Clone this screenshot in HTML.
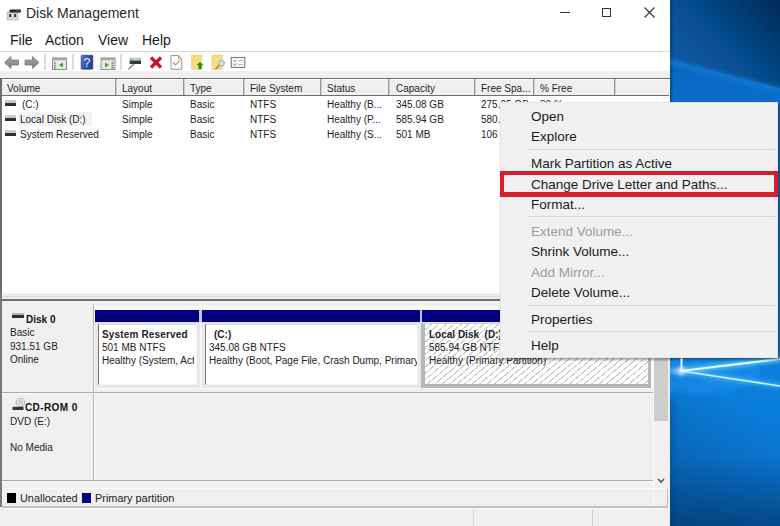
<!DOCTYPE html>
<html><head><meta charset="utf-8">
<style>
*{box-sizing:border-box;margin:0;padding:0}
html,body{width:780px;height:526px;overflow:hidden}
body{position:relative;font-family:"Liberation Sans",sans-serif;background:#0a5fb4}
.a{position:absolute}
.t{position:absolute;white-space:nowrap;color:#222;line-height:1}
#win{left:0;top:0;width:670px;height:526px;background:#fff}
.menu{font-size:14px;color:#1a1a1a}
.h{font-size:10px;color:#1e1e1e}
.r{font-size:10px;color:#1e1e1e}
.hs{top:79px;width:2px;height:16px;background:#969696;border-right:1px solid #d0d0d0}
.b{font-weight:bold}
.cm{font-size:13.5px;color:#1a1a1a;left:531px}
.dis{color:#9d9d9d}
.sep{left:528px;width:247px;height:1px;background:#d7d7d7}
.dicon{width:11px;height:6px;background:linear-gradient(#c9d3c9 0,#c2ccc2 45%,#2c3830 45%,#26302a 100%)}
.bar{height:12px;background:#000080}
.pbox{height:61px;background:#fff;border-left:1px solid #767676;border-top:1px solid #d4d4d4;border-right:1px solid #f2f2f2;border-bottom:1px solid #f2f2f2}
.hatch{background:#fff repeating-linear-gradient(140deg,#fff 0,#fff 3.7px,#cccccc 3.7px,#cccccc 4.8px);border:3px solid #b8b8b8;border-left-width:4px;border-bottom-width:4px;border-top:1px solid #d4d4d4}
.pt{font-size:10px;color:#222}
</style></head><body>
<!-- desktop -->
<svg class="a" style="left:668px;top:0" width="112" height="526" viewBox="668 0 112 526">
<defs>
<linearGradient id="dg" x1="0" y1="0" x2="0" y2="526" gradientUnits="userSpaceOnUse">
<stop offset="0" stop-color="#0b3a78"/>
<stop offset="0.11" stop-color="#0a64ba"/>
<stop offset="0.19" stop-color="#0a6ecc"/>
<stop offset="0.72" stop-color="#0a80dc"/>
<stop offset="0.87" stop-color="#0a76d2"/>
<stop offset="1" stop-color="#04508f"/>
</linearGradient>
<linearGradient id="lg" x1="670" y1="0" x2="676" y2="0" gradientUnits="userSpaceOnUse">
<stop offset="0" stop-color="#06306a" stop-opacity="0.3"/>
<stop offset="1" stop-color="#06306a" stop-opacity="0"/>
</linearGradient>
<linearGradient id="tg" x1="775" y1="0" x2="690" y2="85" gradientUnits="userSpaceOnUse">
<stop offset="0" stop-color="#012c58"/>
<stop offset="0.5" stop-color="#064a8c"/>
<stop offset="1" stop-color="#0a5aa8"/>
</linearGradient>
<filter id="bl" filterUnits="userSpaceOnUse" x="600" y="0" width="200" height="526"><feGaussianBlur stdDeviation="2"/></filter>
<filter id="bl1" filterUnits="userSpaceOnUse" x="600" y="0" width="200" height="526"><feGaussianBlur stdDeviation="0.6"/></filter>
</defs>
<rect x="668" y="0" width="112" height="526" fill="url(#dg)"/>
<path d="M668 0H780V88L668 59Z" fill="url(#tg)" filter="url(#bl1)"/>
<linearGradient id="bg2" x1="670" y1="526" x2="760" y2="420" gradientUnits="userSpaceOnUse"><stop offset="0" stop-color="#042a60" stop-opacity="0.35"/><stop offset="1" stop-color="#042a60" stop-opacity="0"/></linearGradient>
<rect x="668" y="340" width="112" height="186" fill="url(#bg2)"/>
<rect x="668" y="400" width="22" height="140" fill="url(#lg)" filter="url(#bl)"/>
<linearGradient id="lg2" x1="670" y1="0" x2="674" y2="0" gradientUnits="userSpaceOnUse"><stop offset="0" stop-color="#03306a" stop-opacity="0.6"/><stop offset="1" stop-color="#03306a" stop-opacity="0"/></linearGradient>
<rect x="670" y="0" width="5" height="360" fill="url(#lg2)"/>
<path d="M668 61L780 90" stroke="#1a84e0" stroke-width="6" filter="url(#bl)" opacity="0.45"/>
<ellipse cx="700" cy="372" rx="60" ry="22" fill="#2a9cf8" opacity="0.35" filter="url(#bl)"/>
<path d="M681 371L780 359" stroke="#6fd6ff" stroke-width="5.5" filter="url(#bl)" opacity="0.75"/>
<path d="M681 371L780 386" stroke="#6fd6ff" stroke-width="4" filter="url(#bl)" opacity="0.6"/>
<path d="M681 371L780 359" stroke="#dcfaff" stroke-width="2.2" filter="url(#bl1)"/>
<path d="M681 371L780 386" stroke="#c8f2ff" stroke-width="1.5" filter="url(#bl1)"/>
<circle cx="681" cy="371" r="3.5" fill="#ffffff" filter="url(#bl)"/>
<path d="M670 371L681 371" stroke="#bfefff" stroke-width="2.5" filter="url(#bl)"/>
</svg>

<div id="win" class="a"></div>
<!-- title bar -->
<svg class="a" style="left:6px;top:8px" width="16" height="13" viewBox="0 0 16 13">
<rect x="1" y="4" width="11" height="8" fill="#d4d4d4" stroke="#b9b9b9" stroke-width="0.8"/>
<rect x="3.3" y="6" width="1.8" height="3" fill="#2d2d2d"/>
<rect x="8.3" y="6" width="1.8" height="3" fill="#2d2d2d"/>
<rect x="3.5" y="1.5" width="11.5" height="3" rx="1.2" fill="#262626"/>
<rect x="10" y="1.8" width="4.5" height="2.4" rx="1" fill="#34443a"/>
</svg>
<div class="t" style="left:26px;top:6px;font-size:14px;color:#2b2b2b">Disk Management</div>
<div class="a" style="left:560px;top:12px;width:10px;height:1px;background:#333"></div>
<div class="a" style="left:602px;top:8px;width:9px;height:9px;border:1px solid #333"></div>
<svg class="a" style="left:644px;top:7px" width="11" height="11" viewBox="0 0 11 11"><path d="M0.5 0.5L10.5 10.5M10.5 0.5L0.5 10.5" stroke="#333" stroke-width="1.1"/></svg>
<!-- menu -->
<div class="t menu" style="left:10px;top:33px">File</div>
<div class="t menu" style="left:45px;top:33px">Action</div>
<div class="t menu" style="left:98px;top:33px">View</div>
<div class="t menu" style="left:142px;top:33px">Help</div>
<div class="a" style="left:0;top:51px;width:670px;height:1px;background:#dadada"></div>
<!-- toolbar band -->
<div class="a" style="left:0;top:71px;width:670px;height:7px;background:#f0f0f0"></div>
<!-- list panel -->
<div class="a" style="left:0;top:78px;width:670px;height:216px;background:#fff;border-left:2px solid #6e6e6e;border-top:1px solid #6e6e6e"></div>
<div class="a" style="left:2px;top:79px;width:667px;height:17px;background:#f0f0f0;border-bottom:1px solid #6e6e6e;border-top:1px solid #fcfcfc"></div>
<div class="a hs" style="left:115px"></div>
<div class="a hs" style="left:183px"></div>
<div class="a hs" style="left:243px"></div>
<div class="a hs" style="left:320px"></div>
<div class="a hs" style="left:388px"></div>
<div class="a hs" style="left:474px"></div>
<div class="a hs" style="left:533px"></div>
<div class="a hs" style="left:614px"></div>
<div class="t h" style="left:7px;top:83.5px">Volume</div>
<div class="t h" style="left:122px;top:83.5px">Layout</div>
<div class="t h" style="left:190px;top:83.5px">Type</div>
<div class="t h" style="left:250px;top:83.5px">File System</div>
<div class="t h" style="left:327px;top:83.5px">Status</div>
<div class="t h" style="left:396px;top:83.5px">Capacity</div>
<div class="t h" style="left:481px;top:83.5px">Free Spa...</div>
<div class="t h" style="left:540px;top:83.5px">% Free</div>
<!-- rows -->
<div class="a" style="left:18px;top:112px;width:74px;height:14px;background:#f3f3f3"></div>
<div class="a dicon" style="left:5px;top:100px"></div>
<div class="t r" style="left:22px;top:100px">(C:)</div>
<div class="t r" style="left:122px;top:100px">Simple</div>
<div class="t r" style="left:190px;top:100px">Basic</div>
<div class="t r" style="left:250px;top:100px">NTFS</div>
<div class="t r" style="left:327px;top:100px">Healthy (B...</div>
<div class="t r" style="left:396px;top:100px">345.08 GB</div>
<div class="t r" style="left:481px;top:100px">275.05 GB</div>
<div class="t r" style="left:540px;top:100px">80 %</div>
<div class="a dicon" style="left:5px;top:115px"></div>
<div class="t r" style="left:20px;top:115px">Local Disk (D:)</div>
<div class="t r" style="left:122px;top:115px">Simple</div>
<div class="t r" style="left:190px;top:115px">Basic</div>
<div class="t r" style="left:250px;top:115px">NTFS</div>
<div class="t r" style="left:327px;top:115px">Healthy (P...</div>
<div class="t r" style="left:396px;top:115px">585.94 GB</div>
<div class="t r" style="left:481px;top:115px">580.</div>
<div class="a dicon" style="left:5px;top:130px"></div>
<div class="t r" style="left:20px;top:130px">System Reserved</div>
<div class="t r" style="left:122px;top:130px">Simple</div>
<div class="t r" style="left:190px;top:130px">Basic</div>
<div class="t r" style="left:250px;top:130px">NTFS</div>
<div class="t r" style="left:327px;top:130px">Healthy (S...</div>
<div class="t r" style="left:396px;top:130px">501 MB</div>
<div class="t r" style="left:481px;top:130px">106</div>


<!-- graph panel -->
<div class="a" style="left:0;top:293px;width:670px;height:7px;background:#ededed;border-left:2px solid #7a7a7a"></div>
<div class="a" style="left:2px;top:296px;width:668px;height:1px;background:#e0e0e0"></div>
<div class="a" style="left:0;top:299px;width:670px;height:208px;background:#f0f0f0;border-left:2px solid #7a7a7a;border-top:2px solid #707070"></div>
<!-- disk0 row -->
<div class="a" style="left:93px;top:304px;width:1px;height:88px;background:#b8b8b8"></div><div class="a" style="left:94px;top:304px;width:1px;height:88px;background:#fafafa"></div>
<div class="a" style="left:94px;top:306px;width:559px;height:83px;background:#f9f9f9"></div>
<div class="a" style="left:2px;top:392px;width:651px;height:1px;background:#ababab"></div>
<div class="a" style="left:2px;top:393px;width:651px;height:1px;background:#fbfbfb"></div>
<svg class="a" style="left:12px;top:313px" width="12" height="6" viewBox="0 0 12 6"><rect x="0" y="0" width="12" height="2" fill="#a9bba9"/><rect x="0" y="2" width="12" height="3" fill="#2e2e2e"/></svg>
<div class="t b" style="left:26px;top:314.5px;font-size:10px;color:#111">Disk 0</div>
<div class="t" style="left:10px;top:328px;font-size:10px;color:#222">Basic</div>
<div class="t" style="left:10px;top:341.5px;font-size:10px;color:#222">931.51 GB</div>
<div class="t" style="left:10px;top:355px;font-size:10px;color:#222">Online</div>
<!-- partitions -->
<div class="a" style="left:95px;top:321px;width:556px;height:2px;background:#dcdcf2"></div>
<div class="a bar" style="left:95px;top:310px;width:104px"></div>
<div class="a bar" style="left:202px;top:310px;width:218px"></div>
<div class="a bar" style="left:422px;top:310px;width:229px"></div>
<div class="a" style="left:199px;top:310px;width:3px;height:11px;background:#c4c4ec"></div>
<div class="a" style="left:420px;top:310px;width:2px;height:11px;background:#c4c4ec"></div>
<div class="a" style="left:95px;top:323px;width:105px;height:65px;background:#e8e8e8"></div>
<div class="a" style="left:202px;top:323px;width:219px;height:65px;background:#e8e8e8"></div>
<div class="a" style="left:200px;top:323px;width:2px;height:65px;background:#f6f6f6"></div>
<div class="a pbox" style="left:98px;top:324px;width:99px"></div>
<div class="a pbox" style="left:205px;top:324px;width:213px"></div>
<div class="a hatch" style="left:421px;top:323px;width:230px;height:65px"></div>
<div class="t b pt" style="left:102px;top:330px;letter-spacing:0.15px">System Reserved</div>
<div class="t pt" style="left:102px;top:343px">501 MB NTFS</div>
<div class="t pt" style="left:102px;top:356px;width:92px;overflow:hidden">Healthy (System, Active, Primary Partition)</div>
<div class="t b pt" style="left:214px;top:330px">(C:)</div>
<div class="t pt" style="left:209px;top:343px">345.08 GB NTFS</div>
<div class="t pt" style="left:209px;top:356px;width:208px;overflow:hidden">Healthy (Boot, Page File, Crash Dump, Primary Partition)</div>
<div class="t b pt" style="left:429px;top:330px">Local Disk&nbsp; (D:)</div>
<div class="t pt" style="left:429px;top:343px">585.94 GB NTFS</div>
<div class="t pt" style="left:429px;top:356px">Healthy (Primary Partition)</div>
<!-- cd row -->
<div class="a" style="left:93px;top:394px;width:1px;height:86px;background:#b8b8b8"></div><div class="a" style="left:94px;top:394px;width:1px;height:86px;background:#fafafa"></div>
<div class="a" style="left:2px;top:480px;width:651px;height:1px;background:#ababab"></div>
<div class="a" style="left:2px;top:481px;width:651px;height:1px;background:#fbfbfb"></div>
<svg class="a" style="left:12px;top:398px" width="14" height="13" viewBox="0 0 14 13"><circle cx="8.5" cy="4.5" r="4.4" fill="#dedede" stroke="#b0b0b0" stroke-width="0.9"/><circle cx="8.5" cy="4.5" r="1.3" fill="#f4f4f4" stroke="#999" stroke-width="0.6"/><rect x="0.5" y="8.8" width="11" height="3.2" fill="#2e3a32"/></svg>
<div class="t b" style="left:25px;top:403px;font-size:10px;color:#111;letter-spacing:0.4px">CD-ROM 0</div>
<div class="t" style="left:10px;top:417px;font-size:10px;color:#222">DVD (E:)</div>
<div class="t" style="left:10px;top:443px;font-size:10px;color:#222">No Media</div>
<!-- scrollbar -->
<div class="a" style="left:653px;top:301px;width:16px;height:206px;background:#f0f0f0"></div>
<div class="a" style="left:654px;top:301px;width:14px;height:120px;background:#cdcdcd"></div>
<div class="a" style="left:653px;top:301px;width:1px;height:206px;background:#fafafa"></div>
<svg class="a" style="left:657px;top:478px" width="8" height="6" viewBox="0 0 8 6"><path d="M1 1L4 4L7 1" stroke="#555" stroke-width="1.6" fill="none"/></svg>
<!-- legend -->
<div class="a" style="left:2px;top:506px;width:666px;height:2px;background:#c0c0c0"></div>
<div class="a" style="left:667px;top:489px;width:1px;height:18px;background:#c0c0c0"></div><div class="a" style="left:2px;top:488px;width:665px;height:1px;background:#fafafa"></div>
<div class="a" style="left:7px;top:493px;width:9px;height:10px;background:#000"></div>
<div class="t" style="left:20px;top:493px;font-size:10.9px;color:#222">Unallocated</div>
<div class="a" style="left:82px;top:493px;width:9px;height:10px;background:#000080"></div>
<div class="t" style="left:95px;top:493px;font-size:10.9px;color:#222">Primary partition</div>
<!-- status bar -->
<div class="a" style="left:0;top:508px;width:670px;height:18px;background:#f0f0f0;border-top:1px solid #fafafa"></div>
<div class="a" style="left:592px;top:510px;width:1px;height:16px;background:#d0d0d0"></div>
<div class="a" style="left:473px;top:510px;width:1px;height:16px;background:#d8d8d8"></div>

<!-- toolbar -->
<svg class="a" style="left:0;top:52px" width="260" height="19" viewBox="0 0 260 19">
<defs>
<linearGradient id="ag" x1="0" y1="0" x2="0" y2="1"><stop offset="0" stop-color="#a6a6a6"/><stop offset="1" stop-color="#7d7d7d"/></linearGradient>
</defs>
<!-- back -->
<path d="M4.5 10.5L11 4.5V8H18.5V13H11V16.5Z" fill="url(#ag)" stroke="#7a7a7a" stroke-width="0.8" stroke-linejoin="round"/>
<!-- forward -->
<path d="M39 10.5L32.5 4.5V8H25V13H32.5V16.5Z" fill="url(#ag)" stroke="#7a7a7a" stroke-width="0.8" stroke-linejoin="round"/>
<rect x="44.3" y="2" width="1.4" height="16" fill="#cfcfcf"/>
<!-- console tree icon -->
<rect x="52.5" y="6" width="14" height="11.5" fill="#eceeec" stroke="#8e8e8e" stroke-width="1"/>
<rect x="52.5" y="6" width="14" height="2.2" fill="#a4a4a4"/>
<rect x="53.5" y="9" width="3" height="8" fill="#d8d8d8"/>
<rect x="54.2" y="10.5" width="1.5" height="1.2" fill="#666"/><rect x="54.2" y="13" width="1.5" height="1.2" fill="#666"/><rect x="54.2" y="15.2" width="1.5" height="1.2" fill="#666"/>
<rect x="57" y="9" width="9" height="8" fill="#e0f2d8"/>
<path d="M63 10.5L59 13L63 15.5Z" fill="#4a9a3e"/>
<rect x="72.3" y="2" width="1.4" height="16" fill="#cfcfcf"/>
<!-- help -->
<defs><linearGradient id="hg" x1="0" y1="0" x2="1" y2="0.3"><stop offset="0" stop-color="#5078cc"/><stop offset="0.5" stop-color="#3558b0"/><stop offset="1" stop-color="#23428e"/></linearGradient></defs>
<rect x="81.2" y="3.3" width="11.6" height="13.9" rx="0.8" fill="url(#hg)" stroke="#233e80" stroke-width="0.7"/>
<text x="87" y="14.6" font-family="Liberation Sans" font-size="12.5" fill="#e4ecff" text-anchor="middle">?</text>
<!-- console icon 2 -->
<rect x="101" y="6" width="14" height="11.5" fill="#eceeec" stroke="#8e8e8e" stroke-width="1"/>
<rect x="101" y="6" width="14" height="2.2" fill="#a4a4a4"/>
<rect x="111" y="9" width="3" height="8" fill="#d8d8d8"/>
<rect x="111.8" y="10.5" width="1.5" height="1.2" fill="#666"/><rect x="111.8" y="13" width="1.5" height="1.2" fill="#666"/><rect x="111.8" y="15.2" width="1.5" height="1.2" fill="#666"/>
<rect x="102" y="9" width="9" height="8" fill="#e0f2d8"/>
<path d="M105 10.5L109 13L105 15.5Z" fill="#4a9a3e"/>
<rect x="120.3" y="2" width="1.4" height="16" fill="#cfcfcf"/>
<!-- connect -->
<defs><linearGradient id="cg" x1="0" y1="0" x2="1" y2="0"><stop offset="0" stop-color="#9aa8b8"/><stop offset="0.5" stop-color="#c8d0d8"/><stop offset="1" stop-color="#a8c0a8"/></linearGradient></defs>
<rect x="129.7" y="5.8" width="11.3" height="3" fill="url(#cg)"/>
<rect x="129.7" y="8.6" width="11.3" height="3.4" fill="#2e3a36"/>
<rect x="131.5" y="9.3" width="2" height="2" fill="#2e5a40"/><rect x="134.8" y="9.3" width="2" height="2" fill="#1e4a30"/><rect x="138" y="9.3" width="2" height="2" fill="#1e4a30"/>
<path d="M134 12L128.5 17.2" stroke="#7a7a7a" stroke-width="1.2"/>
<!-- red x -->
<path d="M151 5.5L161 15.5M161 5.5L151 15.5" stroke="#c81228" stroke-width="3.2"/>
<!-- page check -->
<path d="M171 3.5H178.5L181.8 6.8V17.3H171Z" fill="#fcfcfc" stroke="#8e8e8e" stroke-width="0.9"/>
<path d="M178.5 3.5V6.8H181.8" fill="none" stroke="#8e8e8e" stroke-width="0.8"/>
<path d="M173.2 10.5L175.6 13L179.8 8.2" fill="none" stroke="#d67b6b" stroke-width="1.1"/>
<!-- folder up -->
<rect x="191.7" y="3" width="10.3" height="14.3" fill="#f7dc86" stroke="#eacb6a" stroke-width="0.6"/>
<path d="M200 10L203.5 13.3H201.6V17.3H198.4V13.3H196.5Z" fill="#1d9a1d"/>
<!-- folder search -->
<rect x="211.9" y="3" width="10.3" height="14.3" fill="#f7dc86" stroke="#eacb6a" stroke-width="0.6"/>
<path d="M219 13.5L215.5 17.3" stroke="#9a7a3a" stroke-width="1.4"/>
<circle cx="221.5" cy="11.2" r="2.9" fill="#cfe3f0" stroke="#8a98a4" stroke-width="0.9"/>
<!-- properties -->
<rect x="231.3" y="5.5" width="13.5" height="10" fill="#f8f8f8" stroke="#7a7a7a" stroke-width="1.1"/>
<path d="M233.5 8.5L234.7 9.6L236.4 7.6M233.5 12.3L234.7 13.4L236.4 11.4" fill="none" stroke="#4c6a8a" stroke-width="0.9"/>
<rect x="238" y="8.3" width="5" height="0.9" fill="#b0b0b0"/><rect x="238" y="12.1" width="5" height="0.9" fill="#b0b0b0"/>
</svg>
<!-- context menu -->
<div class="a" style="left:501px;top:104px;width:279px;height:256px;background:rgba(0,0,0,0.35);filter:blur(1px)"></div>
<div class="a" style="left:500px;top:102px;width:278px;height:256px;background:#f1f1f1;border:1px solid #e4e4e4"></div>
<div class="t cm" style="top:110px">Open</div>
<div class="t cm" style="top:130px">Explore</div>
<div class="a sep" style="top:149px"></div>
<div class="t cm" style="top:157px">Mark Partition as Active</div>
<div class="t cm" style="top:178px">Change Drive Letter and Paths...</div>
<div class="t cm" style="top:198px">Format...</div>
<div class="a sep" style="top:216px"></div>
<div class="t cm dis" style="top:225px">Extend Volume...</div>
<div class="t cm" style="top:245px">Shrink Volume...</div>
<div class="t cm dis" style="top:266px">Add Mirror...</div>
<div class="t cm" style="top:286px">Delete Volume...</div>
<div class="a sep" style="top:305px"></div>
<div class="t cm" style="top:313px">Properties</div>
<div class="a sep" style="top:331px"></div>
<div class="t cm" style="top:339px">Help</div>
<svg class="a" style="left:670px;top:355px" width="30" height="30" viewBox="670 355 30 30">
<filter id="bs" filterUnits="userSpaceOnUse" x="670" y="355" width="30" height="30"><feGaussianBlur stdDeviation="0.7"/></filter>
<path d="M681.5 358.5L681.5 371" stroke="#e8fcff" stroke-width="2" filter="url(#bs)"/>
</svg>
<!-- red box -->
<div class="a" style="left:500px;top:171px;width:278px;height:26px;border:4px solid #d81e2a;border-bottom-width:5px"></div>
</body></html>
